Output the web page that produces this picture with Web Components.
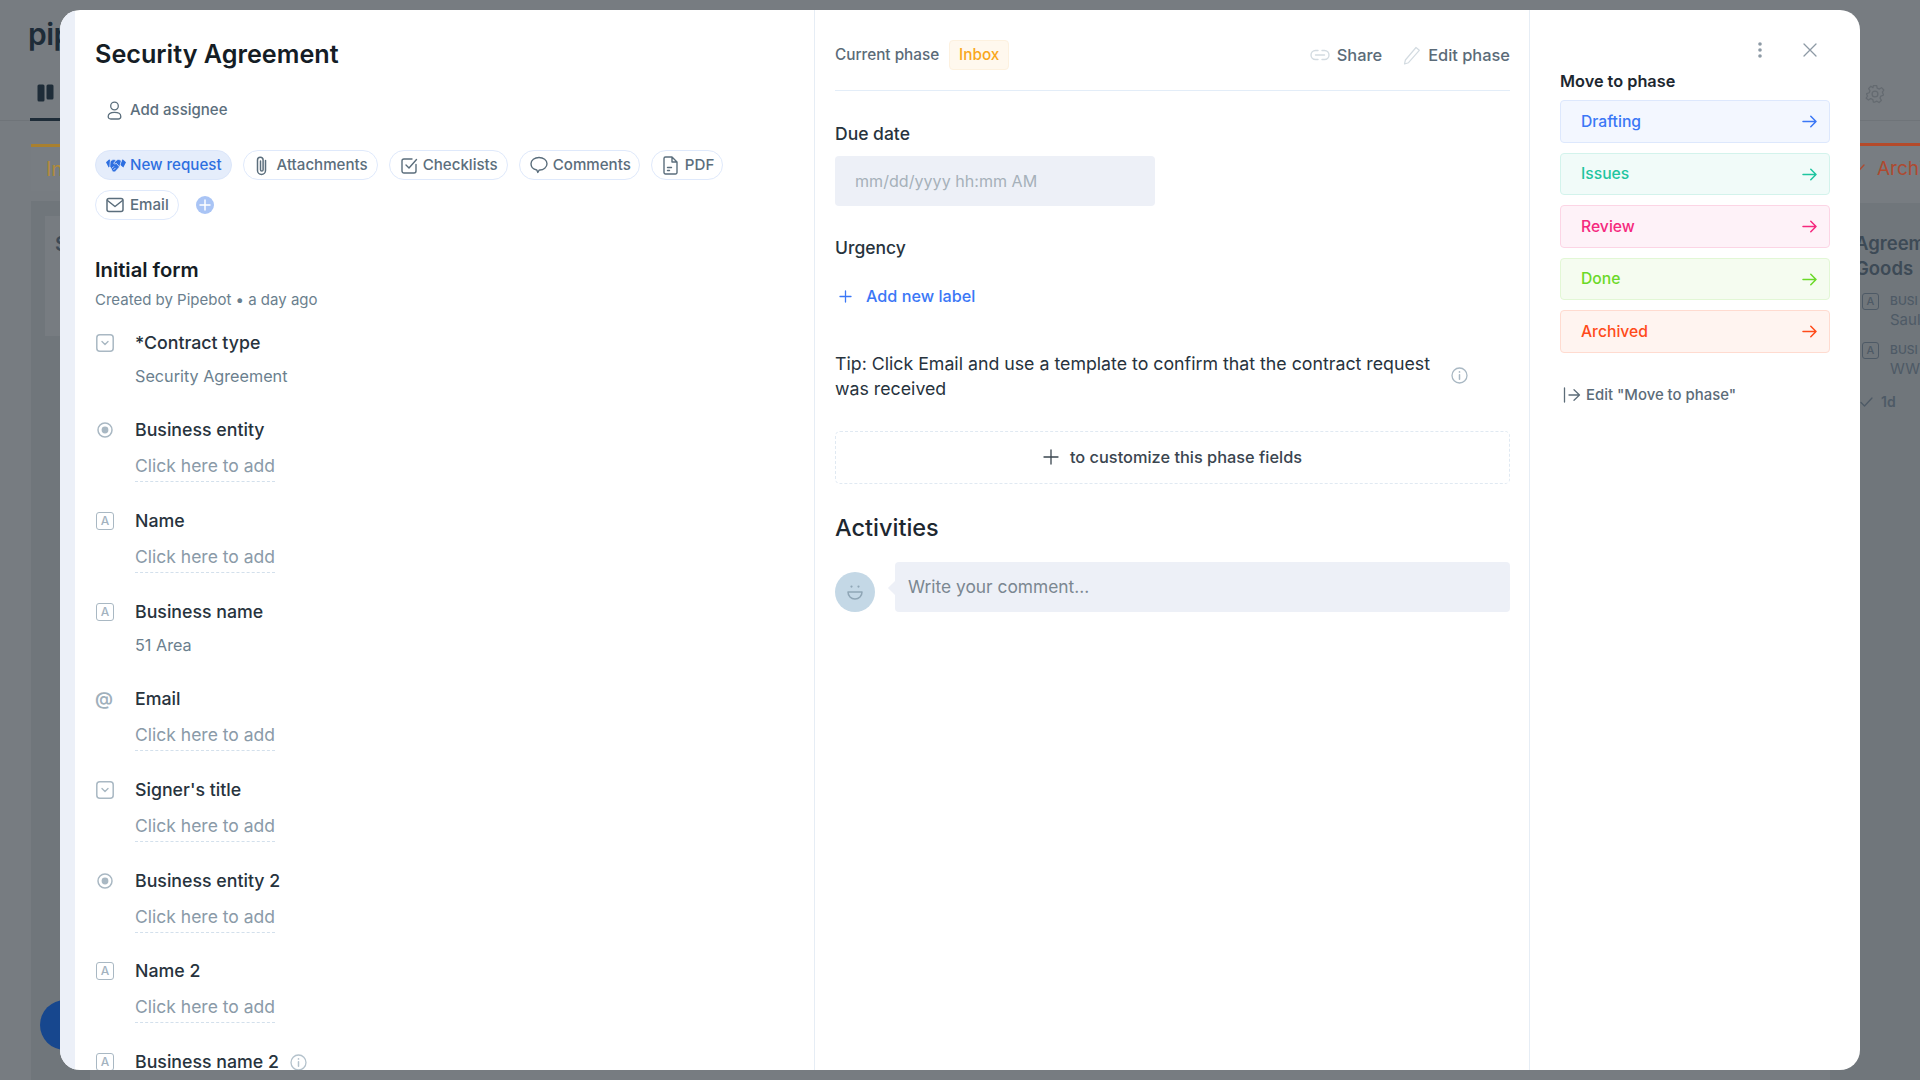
<!DOCTYPE html>
<html lang="en">
<head>
<meta charset="utf-8">
<title>Security Agreement</title>
<style>
html,body{margin:0;padding:0;width:1920px;height:1080px;overflow:hidden;background:#777c81;font-family:Inter,"Noto Sans",sans-serif}
</style>
</head>
<body>
<pipe-app>
  <app-backdrop slot="backdrop"></app-backdrop>
  <card-modal slot="modal">
    <form-pane slot="form">
      <form-field icon="select" label="*Contract type" value="Security Agreement"></form-field>
      <form-field icon="radio" label="Business entity"></form-field>
      <form-field icon="text" label="Name"></form-field>
      <form-field icon="text" label="Business name" value="51 Area"></form-field>
      <form-field icon="at" label="Email"></form-field>
      <form-field icon="select" label="Signer's title"></form-field>
      <form-field icon="radio" label="Business entity 2"></form-field>
      <form-field icon="text" label="Name 2"></form-field>
      <form-field icon="text" label="Business name 2" info></form-field>
    </form-pane>
    <phase-pane slot="phase"></phase-pane>
    <move-pane slot="move">
      <move-button label="Drafting" fg="#3b77f6" bg="#f3f7ff" bd="#dde8fd"></move-button>
      <move-button label="Issues" fg="#1fc5a0" bg="#f1fbf9" bd="#d3f3ec"></move-button>
      <move-button label="Review" fg="#f5297e" bg="#fef2f8" bd="#fcd5e5"></move-button>
      <move-button label="Done" fg="#6bd928" bg="#f5fcf0" bd="#e2f7d5"></move-button>
      <move-button label="Archived" fg="#ff4b1a" bg="#fff4f0" bd="#ffdbd0"></move-button>
    </move-pane>
  </card-modal>
</pipe-app>
<script>
const svg=(w,h,vb,body,extra='')=>`<svg width="${w}" height="${h}" viewBox="${vb}" fill="none" stroke="currentColor" stroke-linecap="round" stroke-linejoin="round" ${extra}>${body}</svg>`;
const ICON={
  handshake:svg(20,15,'0 0 24 18',`<path fill="currentColor" stroke="none" d="M0 5 4 1.5l3.4 6.2L3.2 11.4zM24 5l-4-3.5-3.4 6.2 4.2 3.7z"/><path fill="currentColor" stroke="#e5edfb" stroke-width=".9" d="M5.6 3.2C8.6 1.4 10.6 1.6 12 3c1.6-1.5 4-1.7 6.4.2l-2 7.4-5.2 5.6c-1.2 1.1-3 .6-4-1.2L4.8 10.4z"/><path stroke="#e5edfb" stroke-width="1" d="M12 3 9.2 6.4c1 1 2.200.8 3-.2l4 4.400M9.300 14l1.800-1.800M7.300 12.200l1.800-1.800"/>`),
  clip:svg(13,21,'0 0 13 21',`<path stroke-width="1.500" d="M10.500 5.500v10a4 4 0 0 1-8 0V5a2.800 2.800 0 0 1 5.600 0v9.800a1.300 1.300 0 0 1-2.600 0V6"/>`),
  check:svg(17,17,'0 0 17 17',`<path stroke-width="1.400" d="M15 7.500V14a2 2 0 0 1-2 2H3a2 2 0 0 1-2-2V4a2 2 0 0 1 2-2h8"/><path stroke-width="1.400" d="M5 8l3 3 7.500-8.500"/>`),
  bubble:svg(18,18,'0 0 18 18',`<path stroke-width="1.400" d="M9 1.500c4.400 0 8 2.700 8 6.300s-3.600 6.200-7 6.200c-.6 0-1 .1-1.200.6L7.800 16.500 6.800 14C3.500 13.400 1 11 1 7.800 1 4.200 4.600 1.500 9 1.500z"/>`),
  doc:svg(15,19,'0 0 15 19',`<path stroke-width="1.400" d="M2.500 1h6.500l5 5v10.500a1.500 1.500 0 0 1-1.500 1.500h-10A1.500 1.500 0 0 1 1 16.500v-14A1.500 1.500 0 0 1 2.500 1zM9 1v5h5M4.500 11.500h4M4.500 14.500h2"/>`),
  mail:svg(18,16,'0 0 18 16',`<rect x="1" y="1.500" width="16" height="13" rx="2" stroke-width="1.500"/><path stroke-width="1.500" d="M1.500 3.500 9 9.500l7.500-6"/>`),
  arrow:svg(15,13,'0 0 15 13',`<path stroke-width="1.500" d="M1 6.500h13M8.800 1.200 14 6.500l-5.200 5.300"/>`),
  info:svg(17,17,'0 0 17 17',`<circle cx="8.500" cy="8.500" r="7.500" stroke-width="1.300"/><path stroke-width="1.500" d="M8.500 7.800v4.400"/><path stroke-width="1.700" d="M8.500 4.900v.1"/>`),
  select:svg(18,18,'0 0 18 18',`<rect x=".8" y=".8" width="16.400" height="16.400" rx="3" stroke-width="1.500"/><path stroke-width="1.400" d="M6 7.500 9 10.500l3-3"/>`),
  radio:svg(18,18,'0 0 18 18',`<circle cx="9" cy="9" r="7" stroke-width="1.500"/><circle cx="9" cy="9" r="3.400" fill="currentColor" stroke="none"/>`),
  plus:svg(16,16,'0 0 16 16',`<path stroke-width="1.300" d="M8 1v14M1 8h14"/>`),
  user:svg(15,19,'0 0 15 19',`<circle cx="7.500" cy="5" r="3.800" stroke-width="1.300"/><path stroke-width="1.300" d="M1.200 15.500c0-3 2.400-4.200 6.300-4.200s6.300 1.200 6.300 4.200c0 1.600-1 2.500-2.600 2.500H3.800c-1.600 0-2.600-.9-2.600-2.500z"/>`),
  link:svg(20,12,'0 0 20 12',`<path stroke-width="1.400" d="M8 1.500H5.500a4.500 4.500 0 0 0 0 9H8M12 1.500h2.500a4.500 4.500 0 0 1 0 9H12M5.500 6h9"/>`),
  pencil:svg(18,19,'0 0 18 19',`<path stroke-width="1.200" d="M13 1.500l3.300 2.800L5.500 16.700 1.500 18l.9-4z"/>`),
  dots:svg(4,16,'0 0 4 16',`<g fill="currentColor" stroke="none"><circle cx="2" cy="2" r="1.800"/><circle cx="2" cy="8" r="1.800"/><circle cx="2" cy="14" r="1.800"/></g>`),
  close:svg(14,14,'0 0 14 14',`<path stroke-width="1.300" d="M1 1l12 12M13 1 1 13"/>`),
  editmove:svg(18,16,'0 0 18 16',`<path stroke-width="1.300" d="M1.500 1v14M6 8h10.500M11 2.800 16.500 8 11 13.200"/>`),
  smile:svg(18,20,'0 0 18 20',`<path stroke-width="1.500" d="M2 10h14c0 4-3 7-7 7s-7-3-7-7z"/><path stroke-width="2.200" d="M5.500 4.500v.1M12.500 4.500v.1"/>`),
  gear:svg(20,20,'0 0 24 24',`<circle cx="12" cy="12" r="3.500" stroke-width="1.500"/><path stroke-width="1.500" d="M10 2h4l.6 3 2.600 1.100L19.800 4.400l2.800 2.800-1.700 2.600L22 12.500v1l-3 1-1 2.400 1.700 2.600-2.800 2.800-2.600-1.700-2.300 1H10l-.6-3-2.600-1.100-2.600 1.700L1.400 17l1.700-2.600L2 12.500v-1l3-1 1-2.400L4.300 5.500 7 2.700l2.600 1.700z" />`),
  board:svg(17,18,'0 0 17 18',`<rect x=".5" y=".5" width="7" height="17" rx="1.500" fill="currentColor" stroke="none"/><rect x="9.500" y=".5" width="7" height="15" rx="1.500" fill="currentColor" stroke="none"/>`),
  tick:svg(13,10,'0 0 13 10',`<path stroke-width="1.300" d="M1 5.500 4.500 9 12 1"/>`),
};
function define(name,render){
  customElements.define(name,class extends HTMLElement{
    connectedCallback(){
      if(this.shadowRoot)return;
      this.attachShadow({mode:'open'}).innerHTML=render(this);
    }
  });
}
const BOX='*,:host{box-sizing:border-box}';

define('pipe-app',()=>`<style>${BOX}
:host{display:block;position:relative;width:1920px;height:1080px;overflow:hidden}
.modal{position:absolute;left:60px;top:10px;width:1800px;height:1060px}
.fab{position:absolute;left:40px;top:1000px;width:50px;height:50px;border-radius:50%;background:#17478e}
</style><slot name="backdrop"></slot><div class="fab"></div><div class="modal"><slot name="modal"></slot></div>`);

define('app-backdrop',()=>`<style>${BOX}
:host{display:flex;justify-content:space-between;width:1920px;height:1080px;background:#777c81;overflow:hidden;font-family:Inter,sans-serif}
.col{width:90px;height:1080px;overflow:hidden;display:flex;flex-direction:column}
.top{height:121px;border-bottom:1px solid #6f7479;flex:none}
.left .top{padding:19px 0 0 28px}
.logo{font:600 30px/30px Inter,sans-serif;color:#1e2c38;letter-spacing:-.5px}
.tab{margin-top:35px;margin-left:-28px;padding-left:37px;height:0;color:#1e2c38}
.under{width:60px;height:3px;background:#1e2c38;margin:-3px 0 0 30px;flex:none}
.phase{margin:23px 0 0 31px;height:47px;border-top:3px solid #a9802f;background:#787d82;padding:8px 0 0 15px;font:400 20px/28px Inter,sans-serif;color:#b08a3a;flex:none}
.lane{margin:10px 0 0 31px;padding:15px 0 0 14px;background:#70767b;flex:1}
.card{height:120px;background:#777c81;padding:14px 0 0 10px;font:600 20px/28px Inter,sans-serif;color:#3d4a56}
.right .top{padding:84px 0 0 35px;color:#646a70}
.phase.r{margin:22px 0 0 20px;border-top-color:#b44a2a;color:#ae4a30;padding:2px 0 0 2px;display:flex;gap:12px;align-items:center;height:47px;font-size:19px}
.phase.r svg{color:#ae4a30;flex:none}
.lane.r{margin:13px 0 0;padding:28px 0 0 25px;display:block}
.h{font:600 18.500px/25px Inter,sans-serif;color:#3d4a56;white-space:nowrap}
.mini{display:grid;grid-template-columns:17px 1fr;column-gap:11px;margin:12px 0 0 7px;height:37px;white-space:nowrap}
.mini+.mini{margin-top:12px}
.a{width:17px;height:17px;border:1.500px solid #4e5a66;border-radius:3px;font:500 11px/14px Inter,sans-serif;color:#4e5a66;text-align:center}
.mini b{font:500 12px/16px Inter,sans-serif;color:#4e5a66;display:block}
.mini span{font:400 15px/22px Inter,sans-serif;color:#4e5a66;display:block}
.t{display:flex;gap:8px;align-items:center;margin:14px 0 0 5px;color:#4e5a66;font:600 14px/18px Inter,sans-serif}
</style>
<div class="col left">
  <div class="top"><div class="logo">pip</div><div class="tab">${ICON.board}</div></div>
  <div class="under"></div>
  <div class="phase">In</div>
  <div class="lane"><div class="card">S</div></div>
</div>
<div class="col right">
  <div class="top">${ICON.gear}</div>
  <div class="phase r">${ICON.tick}<span>Archi</span></div>
  <div class="lane r">
    <div class="h">Agreem</div><div class="h">Goods</div>
    <div class="mini"><div class="a">A</div><div><b>BUSI</b><span>Saul</span></div></div>
    <div class="mini"><div class="a">A</div><div><b>BUSI</b><span>WW</span></div></div>
    <div class="t">${ICON.tick}<span>1d</span></div>
  </div>
</div>`);

define('card-modal',()=>`<style>${BOX}
:host{display:flex;width:1800px;height:1060px;background:#fff;border-radius:20px;overflow:hidden;font-family:Inter,sans-serif}
.strip{width:15px;flex:none;background:#ecf0f8}
</style><div class="strip"></div><slot name="form"></slot><slot name="phase"></slot><slot name="move"></slot>`);

define('app-chip',el=>{const on=el.hasAttribute('active');return `<style>${BOX}
:host{display:inline-flex;align-items:center;height:30px;padding:0 ${el.getAttribute('rpad')||9}px 0 ${el.getAttribute('pad')||10}px;gap:${el.getAttribute('gap')||6}px;border:1.500px solid ${on?'#dbe6fa':'#dfe9fb'};border-radius:15px;background:${on?'#e5edfb':'#fff'};color:${on?'#2e6fe0':'#5b6e7c'};font:500 15.100px/20px Inter,sans-serif;white-space:nowrap}
svg{display:block;flex:none}
</style>${ICON[el.getAttribute('icon')]}<slot></slot>`});

define('form-field',el=>{
  const ic=el.getAttribute('icon'),v=el.getAttribute('value'),info=el.hasAttribute('info');
  const glyph=ic==='text'?`<span class="a">A</span>`:ic==='at'?`<span class="at">@</span>`:ICON[ic];
  return `<style>${BOX}
:host{display:grid;grid-template-columns:40px 1fr;font-family:Inter,sans-serif}
.ic{height:24px;display:flex;align-items:center;padding-left:1px;color:#a9b8c3}
.a{display:block;width:18px;height:18px;border:1.500px solid #a9b8c3;border-radius:3px;font:500 12px/15px Inter,sans-serif;text-align:center;color:#a3b3bf}
.at{font:600 18px/24px Inter,sans-serif;color:#9fb0bc;margin-left:-1px}
.l{font:500 17.750px/24px Inter,sans-serif;color:#27333d;display:flex;align-items:center;gap:11px;white-space:nowrap}
.l svg{color:#b4c2cc}
.v{grid-column:2;margin-top:9px;margin-bottom:30.500px;font:400 16.200px/24px Inter,sans-serif;color:#6b7f8e}
.e{grid-column:2;justify-self:start;margin-top:12px;margin-bottom:26.750px;padding-bottom:3px;border-bottom:1px dashed #d3e0ec;font:400 17.500px/24px Inter,sans-serif;color:#8a9aa8;width:140px;white-space:nowrap}
</style><div class="ic">${glyph}</div><div class="l">${el.getAttribute('label')}${info?ICON.info:''}</div>${v?`<div class="v">${v}</div>`:`<div class="e">Click here to add</div>`}`});

define('form-pane',()=>`<style>${BOX}
:host{display:block;width:739px;height:1060px;flex:none;padding:28px 0 0 20px;overflow:hidden;font-family:Inter,sans-serif}
h1{margin:0;font:600 25.200px/32px Inter,sans-serif;color:#151d25}
.as{display:flex;align-items:center;gap:8px;margin:28px 0 0 12px;font:500 15px/24px Inter,sans-serif;color:#5b6e7c}
.as svg{color:#5b6e7c}
.chips{display:flex;flex-wrap:wrap;gap:10px 11px;width:690px;margin-top:28px;align-items:center}
.add{width:18px;height:18px;border-radius:50%;background:#a9c4f5;margin-left:6px;color:#fff;display:flex;align-items:center;justify-content:center}
h2{margin:36px 0 0;font:600 20.200px/28px Inter,sans-serif;color:#151d25}
.by{margin:6px 0 20.500px;font:400 15px/20px Inter,sans-serif;color:#6b7f8e}
</style>
<h1>Security Agreement</h1>
<div class="as">${ICON.user}<span>Add assignee</span></div>
<div class="chips">
  <app-chip icon="handshake" gap="4" active>New request</app-chip>
  <app-chip icon="clip" pad="11" gap="9">Attachments</app-chip>
  <app-chip icon="check" pad="11" gap="5">Checklists</app-chip>
  <app-chip icon="bubble" gap="5" rpad="8">Comments</app-chip>
  <app-chip icon="doc" pad="11" gap="7" rpad="8">PDF</app-chip>
  <app-chip icon="mail">Email</app-chip>
  <span class="add">${svg(12,12,'0 0 12 12','<path stroke-width="1.500" d="M6 1v10M1 6h10"/>')}</span>
</div>
<h2>Initial form</h2>
<div class="by">Created by Pipebot • a day ago</div>
<slot></slot>`);

define('phase-pane',()=>`<style>${BOX}
:host{display:block;width:716px;height:1060px;flex:none;padding:0 19px 0 20px;border-left:1px solid #e6edf5;border-right:1px solid #e6edf5;font-family:Inter,sans-serif}
.head{display:flex;align-items:center;height:81px;padding:30px 0 20px;border-bottom:1px solid #e3edf8;font:500 15.300px/20px Inter,sans-serif;color:#5b6b78}
.inbox{margin-left:10px;height:30px;width:60px;display:flex;align-items:center;justify-content:center;background:#fff8ee;border:1px solid #fdf1df;border-radius:4px;color:#f9a71c}
.sp{flex:1}
.act{display:flex;align-items:center;gap:7px;font:500 16.400px/20px Inter,sans-serif;color:#5b6b78}
.act svg{color:#d3dbe1}
.act+.act{margin-left:21px}
.lab{font:500 17.500px/24px Inter,sans-serif;color:#27333d}
.date{margin-top:10px;width:320px;height:50px;background:#edf0f7;border-radius:4px;padding:0 20px;font:400 16.100px/50px Inter,sans-serif;color:#a6b1ba}
.new{display:flex;align-items:center;gap:14px;margin:24px 0 0 4px;font:500 16.200px/24px Inter,sans-serif;color:#3b77f6}
.tip{display:flex;align-items:center;margin-top:42.500px;font:400 17.750px/25px Inter,sans-serif;color:#27333d}
.tip div{width:606px}
.tip svg{margin-left:10px;color:#a9b8c3;flex:none}
.cust{margin-top:30px;height:53px;border:1px dashed #e0e9f2;border-radius:5px;display:flex;align-items:center;justify-content:center;gap:11px;font:500 16.350px/20px Inter,sans-serif;color:#3a454f}
h3{margin:28px 0 0;font:500 23.500px/32px Inter,sans-serif;color:#1d2730}
.cm{display:flex;align-items:flex-end;gap:20px;margin-top:18px}
.av{width:40px;height:40px;border-radius:50%;background:#c4d8e6;color:#8fa6b6;display:flex;align-items:center;justify-content:center;flex:none}
.box{flex:1;height:50px;background:#edf0f7;border-radius:4px;padding:0 13px;font:400 17.350px/50px Inter,sans-serif;color:#7b8791;position:relative}
.box::before{content:"";position:absolute;left:-5px;top:21px;width:10px;height:10px;background:#edf0f7;transform:rotate(45deg)}
</style>
<div class="head"><span>Current phase</span><span class="inbox">Inbox</span><span class="sp"></span>
  <span class="act">${ICON.link}<span>Share</span></span><span class="act">${ICON.pencil}<span>Edit phase</span></span></div>
<div class="lab" style="margin-top:31px">Due date</div>
<div class="date">mm/dd/yyyy hh:mm AM</div>
<div class="lab" style="margin-top:30px">Urgency</div>
<div class="new">${svg(13,13,'0 0 13 13','<path stroke-width="1.300" d="M6.500 1v11M1 6.500h11"/>')}<span>Add new label</span></div>
<div class="tip"><div>Tip: Click Email and use a template to confirm that the contract request was received</div>${ICON.info}</div>
<div class="cust">${ICON.plus}<span>to customize this phase fields</span></div>
<h3>Activities</h3>
<div class="cm"><div class="av">${ICON.smile}</div><div class="box">Write your comment...</div></div>`);

define('move-button',el=>`<style>${BOX}
:host{display:flex;align-items:center;justify-content:space-between;height:42.500px;padding:1px 12px 0 20px;background:${el.getAttribute('bg')};border:1px solid ${el.getAttribute('bd')};border-radius:4px;color:${el.getAttribute('fg')};font:500 15.700px/20px Inter,sans-serif}
svg{display:block}
</style><span>${el.getAttribute('label')}</span>${ICON.arrow}`);

define('move-pane',()=>`<style>${BOX}
:host{display:block;flex:1;padding:30px 30px 0 30px;font-family:Inter,sans-serif}
.tools{display:flex;justify-content:flex-end;align-items:center;height:20px;gap:41px;padding-right:13px;color:#8d9aa5}
.tt{margin:11px 0 9px;font:600 16.300px/20px Inter,sans-serif;color:#1d2730}
.list{display:flex;flex-direction:column;gap:10px}
.edit{display:flex;align-items:center;gap:5px;margin:31.500px 0 0 3px;font:500 14.900px/22px Inter,sans-serif;color:#5c6c78}
</style>
<div class="tools">${ICON.dots}${ICON.close}</div>
<div class="tt">Move to phase</div>
<div class="list"><slot></slot></div>
<div class="edit">${ICON.editmove}<span>Edit "Move to phase"</span></div>`);
</script>
</body>
</html>
